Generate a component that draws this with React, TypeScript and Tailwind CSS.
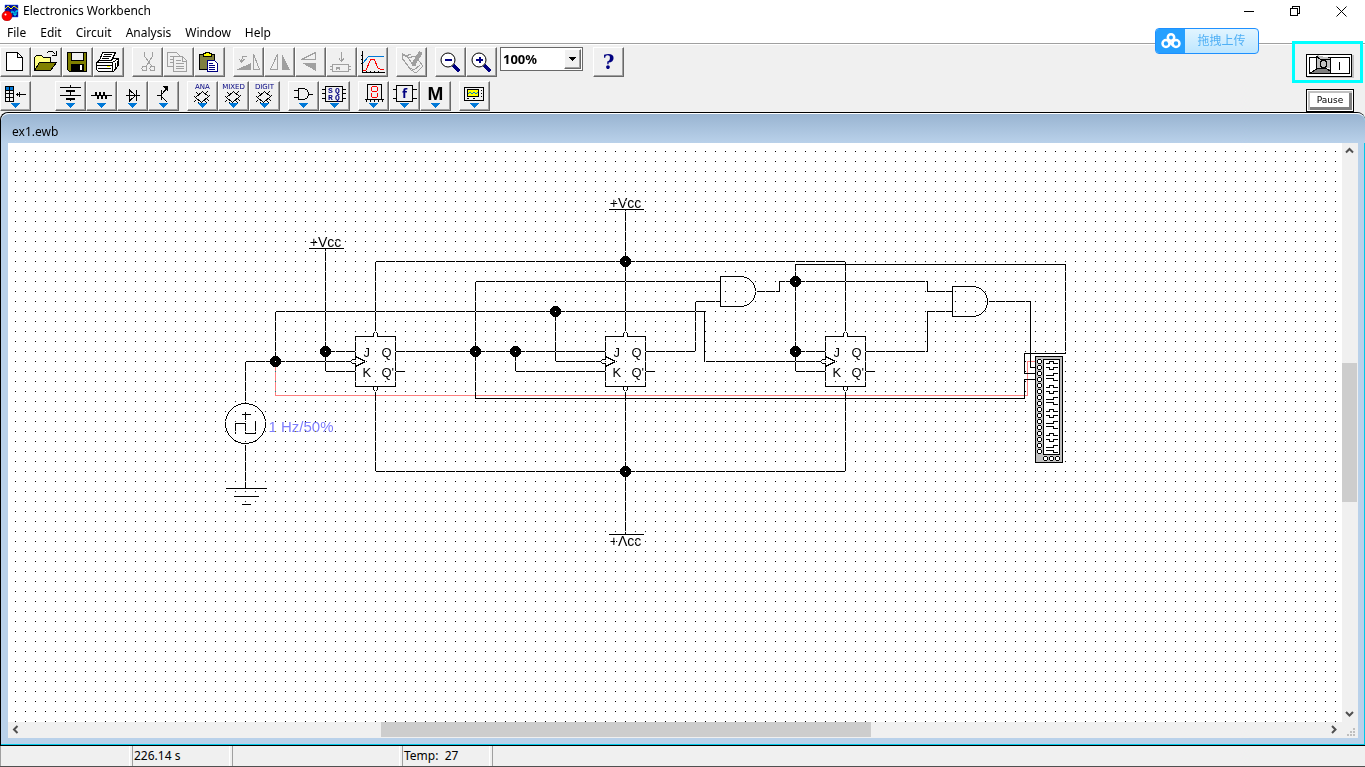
import React from 'react';

const MENUS = ['File', 'Edit', 'Circuit', 'Analysis', 'Window', 'Help'];

interface ToolButtonProps {
  label: string;
  children: React.ReactNode;
}

const ToolButton: React.FC<ToolButtonProps> = ({ label, children }) => (
  <button
    type="button"
    aria-label={label}
    className="h-[30px] w-[31px] shrink-0 border-t border-r border-b border-l border-t-white border-r-[#696969] border-b-[#696969] border-l-white bg-[#f0f0f0] shadow-[inset_-1px_-1px_#a0a0a0]"
  >
    <svg viewBox="1 1 29 28" className="h-full w-full" fill="none" stroke="black" shapeRendering="crispEdges">
      {children}
    </svg>
  </button>
);

// Parts bin button: same as a tool button with the blue drop marker
const BinButton: React.FC<ToolButtonProps> = ({ label, children }) => (
  <ToolButton label={label}>
    {children}
    <path d="M10 22h10l-5 5z" fill="#0078d7" stroke="none" />
  </ToolButton>
);

const Group: React.FC<{ children: React.ReactNode }> = ({ children }) => <div className="flex items-start">{children}</div>;

const Chip: React.FC<{ name: string }> = ({ name }) => (
  <g>
    <path d="M15.5 10.5l6 5-7 6-6-5z" fill="#f0f0f0" />
    <path d="M11 13l-2-2M8 16l-2-1M19 12l2-2M22 15l2-1M9 19l-2 2M12 21l-1 2M20 18l2 2M18 20l2 2" strokeDasharray="1 1" />
    <text x="15.5" y="8" textAnchor="middle" fontSize="7" fill="#000080" stroke="none" fontFamily="'DejaVu Sans', sans-serif">{name}</text>
  </g>
);

const TitleBar: React.FC = () => (
  <header className="flex h-[22px] items-center justify-between bg-white pr-px">
    <div className="flex items-center gap-1">
      <svg width="19" height="19" viewBox="0 0 19 19">
        <path d="M5 3h13v12H5z" fill="#00008b" />
        <path d="M5 3h13v12H5zM8 3v12M12 3v12M15 3v12M5 9h13" fill="none" stroke="#1c60ff" strokeWidth=".5" />
        <path d="M5 7l3-3 3 3 3-3 4 3" fill="none" stroke="#ff0" />
        <path d="M11 14v-4h3v3h2v-4h2" fill="none" stroke="#0ff" />
        <circle cx="7" cy="14" r="5" fill="#f00" stroke="#900" strokeWidth=".6" />
        <circle cx="5.5" cy="12.5" r="1" fill="#fff" />
      </svg>
      <h1 className="text-[12px] leading-5">Electronics Workbench</h1>
    </div>
    <div className="flex">
      <button type="button" aria-label="Minimize" className="flex h-5 w-[46px] items-center justify-center">
        <svg width="11" height="11" stroke="black" fill="none" shapeRendering="crispEdges"><path d="M0 5.5h10" /></svg>
      </button>
      <button type="button" aria-label="Restore" className="flex h-5 w-[46px] items-center justify-center">
        <svg width="11" height="11" stroke="black" fill="none" shapeRendering="crispEdges"><path d="M.5 2.5h7v7h-7zM2.5 2.5v-2h7v7h-2" /></svg>
      </button>
      <button type="button" aria-label="Close" className="flex h-5 w-[46px] items-center justify-center">
        <svg width="11" height="11" stroke="black" fill="none"><path d="M.5.5l10 10M10.5.5l-10 10" /></svg>
      </button>
    </div>
  </header>
);

const MainTools: React.FC = () => (
  <div className="flex items-start gap-2">
    <Group>
      <ToolButton label="New">
        <path d="M6.5 5.5h11l5 5v13h-16z" fill="#fff" />
        <path d="M17.5 5.5v5h5" />
      </ToolButton>
      <ToolButton label="Open">
        <path d="M3.5 22.5v-12l2-2h5l2 2h7v5" fill="#ffff80" />
        <path d="M3.5 23.5l5-8h17l-6 8z" fill="#808000" />
        <path d="M15.5 6.5l2-2h4l3 3M25.5 4v5M21 8.5h5" />
      </ToolButton>
      <ToolButton label="Save">
        <path d="M5.5 5.5h19v19h-17l-2-2z" fill="#808000" />
        <path d="M9.5 5.5h12v8h-12z" fill="#f0f0f0" />
        <path d="M9 17h13v7H9z" fill="#000" stroke="none" />
        <path d="M18 18h2v5h-2z" fill="#fff" stroke="none" />
      </ToolButton>
      <ToolButton label="Print">
        <path d="M3.5 15.5l5-4h17v7l-5 6h-15l-2-2z" fill="#fff" />
        <path d="M9.5 5.5h13l-4 8h-12z" fill="#fff" />
        <path d="M11 7.5h8M10 9.5h8M9 11.5h7M3.5 15.5h16l6-4M19.5 16v8M4 18.5h15M5 21.5h13M22 16v5M24 14v5" />
        <path d="M14 19h3v1h-3z" fill="#ff0" stroke="none" />
      </ToolButton>
    </Group>
    <Group>
      <ToolButton label="Cut">
        <g stroke="#a0a0a0">
          <path d="M12.5 5v4l7 10M20.5 5v4l-6 10" />
          <circle cx="12.5" cy="21.5" r="2.5" />
          <circle cx="20.5" cy="21.5" r="2.5" />
        </g>
      </ToolButton>
      <ToolButton label="Copy">
        <g stroke="#a0a0a0">
          <path d="M4.5 5.5h9l3 3v11h-12zM7 9.5h7M7 12.5h7M7 15.5h7" />
          <path d="M10.5 9.5h9l4 4v11h-13z" fill="#f0f0f0" />
          <path d="M13 13.5h5M13 16.5h8M13 19.5h8M13 21.5h8M19.5 10v4h4" />
        </g>
      </ToolButton>
      <ToolButton label="Paste">
        <path d="M5.5 7.5h15v15h-15z" fill="#808040" />
        <path d="M9.5 9.5v-3h2v-1h4v1h2v3z" fill="#ff0" />
        <path d="M13.5 13.5h7l3 3v8h-10z" fill="#fff" stroke="#000080" />
        <path d="M15 16.5h4M15 18.5h6M15 20.5h6M15 22.5h6" stroke="#000080" />
      </ToolButton>
    </Group>
    <Group>
      <ToolButton label="Rotate">
        <path d="M3 23l15-7v7z" fill="#a0a0a0" stroke="none" />
        <path d="M20.5 22.5V7l6 15.5zM14 9.5H9.5l-1 5M6 12l2.5 3 3-3" stroke="#a0a0a0" />
      </ToolButton>
      <ToolButton label="Flip horizontal">
        <path d="M6.5 22.5h7V7z" stroke="#a0a0a0" />
        <path d="M18 7v16h8z" fill="#a0a0a0" stroke="none" />
      </ToolButton>
      <ToolButton label="Flip vertical">
        <path d="M6.5 12.5h14V5.5z" stroke="#a0a0a0" />
        <path d="M7 16h14v8z" fill="#a0a0a0" stroke="none" />
      </ToolButton>
      <ToolButton label="Create subcircuit">
        <g stroke="#a0a0a0">
          <path d="M6.5 17.5h16v7h-16zM4 19.5h2M4 22.5h2M23 19.5h2M23 22.5h2M15.5 5v9M13 11.5l2.5 3 2.5-3" />
          <path d="M10.5 23v-3h3v3M10 21.5h3" />
        </g>
      </ToolButton>
      <ToolButton label="Display graphs">
        <path d="M5.5 4v21.5h22M9.5 24v2M13.5 24v2M17.5 24v2M21.5 24v2M4 8.5h2M4 12.5h2M4 16.5h2" />
        <path d="M6 16l6-7h15" stroke="#0078d7" />
        <path d="M6 24l3-1 5-11h3l4 9 2 1h4" stroke="#f00" />
      </ToolButton>
    </Group>
    <Group>
      <ToolButton label="Component properties">
        <path d="M6 6v5l9 12 5 3 7-7-8-10-7 2z" stroke="#a0a0a0" />
        <path d="M25 5l-8 13" stroke="#a0a0a0" strokeWidth="4" />
        <path d="M6 9l5-1 6 11 3-1M12 20l6 3 6-5M10 9l5-2" stroke="#a0a0a0" />
      </ToolButton>
    </Group>
    <Group>
      <ToolButton label="Zoom out">
        <circle cx="13" cy="13" r="7" fill="#fff" shapeRendering="auto" />
        <path d="M10 13h7" stroke="#000080" strokeWidth="2" />
        <path d="M18.5 18.5l6 6" stroke="#000080" strokeWidth="3" />
      </ToolButton>
      <ToolButton label="Zoom in">
        <circle cx="13" cy="13" r="7" fill="#fff" shapeRendering="auto" />
        <path d="M10 13h7M13.5 10v6" stroke="#000080" strokeWidth="2" />
        <path d="M18.5 18.5l6 6" stroke="#000080" strokeWidth="3" />
      </ToolButton>
      <div className="relative ml-[3px] h-6 w-[83px]">
        <select
          aria-label="Zoom level"
          defaultValue="100%"
          className="block h-full w-full appearance-none border border-[#696969] bg-white pl-0.5 text-[13px] leading-5 font-bold"
        >
          <option>50%</option>
          <option>80%</option>
          <option>100%</option>
          <option>150%</option>
        </select>
        <span className="pointer-events-none absolute top-0.5 right-0.5 bottom-0.5 flex w-[17px] items-center justify-center border border-t-white border-r-[#696969] border-b-[#696969] border-l-white bg-[#f0f0f0] shadow-[inset_-1px_-1px_#a0a0a0]">
          <svg width="7" height="4" shapeRendering="crispEdges"><path d="M0 0h7L3.5 4z" /></svg>
        </span>
      </div>
    </Group>
    <Group>
      <button
        type="button"
        aria-label="Help"
        className="ml-0.5 h-[30px] w-[31px] border border-t-white border-r-[#696969] border-b-[#696969] border-l-white bg-[#f0f0f0] text-center font-['DejaVu_Serif',serif] text-[20px] leading-7 font-bold text-[#000080] shadow-[inset_-1px_-1px_#a0a0a0]"
      >
        ?
      </button>
    </Group>
  </div>
);

const PartsTools: React.FC = () => (
  <div className="flex items-start gap-2">
    <div className="mr-4 flex">
      <ToolButton label="Favorites">
        <path d="M5 5h9v4H5z" fill="#0078d7" stroke="none" />
        <path d="M5.5 5.5h8v15h-8zM9.5 5v15M5 9.5h8M5 12.5h8M5 16.5h8M16 13.5h10M19.5 11v5M17.5 12v3" />
        <path d="M10 22h10l-5 5z" fill="#0078d7" stroke="none" />
      </ToolButton>
    </div>
    <Group>
      <BinButton label="Sources">
        <path d="M15.5 4v2M5 6.5h21M5 14.5h21M15.5 17v3" />
        <path d="M11 10h9M11 18h9" strokeWidth="2" />
        <path d="M15.5 10v4" />
      </BinButton>
      <BinButton label="Basic">
        <path d="M5 14.5h4l1-3 2 6 2-6 2 6 2-6 2 6 1-3h5" />
      </BinButton>
      <BinButton label="Diodes">
        <path d="M9 14.5h14M12.5 9v11l6-5.5zM19.5 9v11" />
      </BinButton>
      <BinButton label="Transistors">
        <path d="M9 14.5h4M13.500 9v10M14 13l5-6M14 16l5 5" />
        <path d="M15 5h4v4z" fill="#000" />
      </BinButton>
    </Group>
    <Group>
      <BinButton label="Analog ICs">
        <Chip name="ANA" />
      </BinButton>
      <BinButton label="Mixed ICs">
        <Chip name="MIXED" />
      </BinButton>
      <BinButton label="Digital ICs">
        <Chip name="DIGIT" />
      </BinButton>
    </Group>
    <Group>
      <BinButton label="Logic gates">
        <path d="M6 9.5h4M6 16.5h4M20 13.5h5M10.5 7.5h4c8 0 8 11 0 11h-4z" />
      </BinButton>
      <BinButton label="Digital">
        <path d="M6.5 5.5h17v15h-17zM3 8.5h3M3 12.5h3M3 17.5h3M24 8.5h3M24 12.5h3M24 17.5h3" />
        <g fontSize="8" fill="#000080" stroke="none" fontFamily="'Liberation Mono', monospace" fontWeight="bold">
          <text x="9" y="12">S</text>
          <text x="16" y="12">Q</text>
          <text x="9" y="19">R</text>
          <text x="16" y="19">Q</text>
        </g>
      </BinButton>
    </Group>
    <Group>
      <BinButton label="Indicators">
        <path d="M9.5 3.5h14v15h-14zM7 18.5h19M8.5 18v3M12.5 18v3M16.5 18v3M20.5 18v3M24.5 18v3" />
        <path d="M13.5 6v4M19.5 6v4M13.5 12v4M19.5 12v4M14 5.5h5M14 10.5h5M14 16.5h5" stroke="#f00" />
      </BinButton>
      <BinButton label="Controls">
        <path d="M7.5 4.5h16v16h-16zM4 8.5h3M4 17.5h3M24 8.5h4M24 17.5h4" />
        <text x="15.5" y="17" textAnchor="middle" fontSize="13" fontWeight="bold" fill="#000080" stroke="none">f</text>
      </BinButton>
      <BinButton label="Miscellaneous">
        <text x="15.5" y="19" textAnchor="middle" fontSize="19" fontWeight="bold" fill="#000" stroke="none" fontFamily="'Liberation Sans', sans-serif">M</text>
      </BinButton>
    </Group>
    <Group>
      <BinButton label="Instruments">
        <path d="M5.5 6.5h19v13h-19z" fill="#f0f0f0" />
        <path d="M8.5 8.5h11v7h-11z" fill="#ff0" />
        <path d="M9 13l2-2 2 2 2-2 2 2 2-2" stroke="#0078d7" />
        <path d="M22 9.5h1M22 12.5h1M22 15.5h1M8 17.5h2M14 17.5h2" />
      </BinButton>
    </Group>
  </div>
);

const FLIP_FLOPS = [355, 605, 825];
const SUPPLIES = [
  { x: 325, line: 248, text: 246, label: '+Vcc' },
  { x: 625, line: 209, text: 207, label: '+Vcc' },
  { x: 625, line: 534, text: 545, label: '+Λcc' },
];
const NODES = [
  [275, 361], [325, 351], [475, 351], [515, 351], [555, 311],
  [625, 261], [625, 471], [795, 281], [795, 351],
];
const WIRES = [
  'M245 403V361H350',
  'M275 361V311H704V361H820',
  'M555 311V361H600',
  'M325 248V371H355M325 351H355',
  'M375 331V261H845V331',
  'M625 209V331M625 391V534',
  'M395 351H605M395 371H405',
  'M475 351V281H720M475 351V398H1024V379H1036',
  'M515 351V371H605',
  'M645 351H695V301H720M645 371H655',
  'M756 291H779V281H927V291H952',
  'M795 281V264H1065V353H1024V373H1036',
  'M795 281V371H825M795 351H825',
  'M865 351H927V311H952M865 371H875',
  'M988 301H1030V367H1036',
  'M375 391V471H845V391',
  'M245 444V488M225 488H266M233 496H258M241 504H250',
];

const FlipFlop: React.FC<{ x: number }> = ({ x }) => (
  <g transform={`translate(${x} 336)`}>
    <path d="M0 0H40V50H0Z" />
    <path d="M0 20L10 25L0 30" />
    <path d="M18 0V-3L20 -5L22 -3V0M18 50V53L20 55L22 53V50M0 23H-3L-5 25L-3 27H0" fill="#fff" />
    <g stroke="none" fill="#000" fontSize="13">
      <text x="8" y="20">J</text>
      <text x="26" y="20">Q</text>
      <text x="7" y="40">K</text>
      <text x="26" y="40">Q'</text>
    </g>
  </g>
);

const LogicAnalyzer: React.FC = () => (
  <g transform="translate(1035 356)">
    <path d="M0 0H27V106H0Z" fill="#c0c0c0" />
    <path d="M8 3H24V98H8Z" fill="#fff" />
    {Array.from({ length: 16 }, (_, i) => (
      <circle key={i} cx="4" cy={5 + i * 6} r="2" fill="#fff" />
    ))}
    {[10, 16, 22].map((x) => (
      <circle key={x} cx={x} cy="102" r="2" fill="#fff" />
    ))}
    {[0, 24, 48, 72].map((y) => (
      <path key={y} d={`M10 ${y + 7}h4v-2h4v2h4M10 ${y + 11}h4v2h4v-2h4M10 ${y + 19}h8v-2h4M10 ${y + 22}h8v2h4`} />
    ))}
  </g>
);

const Schematic: React.FC = () => (
  <svg className="block h-full w-full bg-white font-['Liberation_Sans',sans-serif]" role="img" aria-label="ex1.ewb schematic">
    <defs>
      <pattern id="grid" x="5" y="1" width="10" height="10" patternUnits="userSpaceOnUse">
        <rect width="1" height="1" fill="#fff" />
      </pattern>
    </defs>
    <rect width="100%" height="100%" fill="#fff" />
    <g transform="translate(-7.5 -142.5)" fill="none" stroke="#000" shapeRendering="crispEdges">
      <path d="M275 361V395H1027V361H1036" stroke="#ff8080" />
      {WIRES.map((d) => (
        <path key={d} d={d} />
      ))}
      {FLIP_FLOPS.map((x) => (
        <FlipFlop key={x} x={x} />
      ))}
      <path d="M720 276H740A15 15 0 0 1 740 306H720Z" />
      <path d="M952 286H972A15 15 0 0 1 972 316H952Z" />
      <circle cx="245" cy="423" r="20" />
      <path d="M241 414H250M245 410V419M235 433V423H245V433H255V421" />
      {SUPPLIES.map((s) => (
        <g key={s.line}>
          <path d={`M${s.x - 17} ${s.line}H${s.x + 18}`} />
          <text x={s.x} y={s.text} textAnchor="middle" fontSize="14" fill="#000" stroke="none">{s.label}</text>
        </g>
      ))}
      <text x="268" y="431" fontSize="15" fill="#8080ff" stroke="none">1 Hz/50%</text>
      {NODES.map(([x, y]) => (
        <circle key={`${x}-${y}`} cx={x} cy={y} r="5" fill="#000" />
      ))}
    </g>
    {/* grid dots invert whatever they land on */}
    <g transform="translate(-8 -143)" className="mix-blend-difference" shapeRendering="crispEdges">
      <rect x="8" y="143" width="100%" height="100%" fill="url(#grid)" />
    </g>
    <g transform="translate(-7.5 -142.5)" fill="none" stroke="#000" shapeRendering="crispEdges">
      <LogicAnalyzer />
    </g>
  </svg>
);

interface ArrowProps {
  label: string;
  d: string;
}

const ScrollArrow: React.FC<ArrowProps> = ({ label, d }) => (
  <button type="button" aria-label={label} className="flex h-4 w-4 shrink-0 items-center justify-center pr-px pb-px">
    <svg width="9" height="9" fill="none" stroke="#505050" strokeWidth="2"><path d={d} /></svg>
  </button>
);

const DocumentWindow: React.FC = () => (
  <main className="flex min-h-0 flex-1 flex-col rounded-t-lg border border-r-0 border-black bg-[#b9d1ea] shadow-[inset_-1px_-1px_#00c8e8]">
    <div className="flex h-[30px] shrink-0 items-end rounded-t-lg border-t border-white bg-gradient-to-b from-[#99b4d1] to-[#b9d1ea] pb-0.5 pl-[11px]">
      <h2 className="text-[12px] leading-[18px]">ex1.ewb</h2>
    </div>
    <div className="mr-[7px] mb-[7px] ml-[7px] flex min-h-0 flex-1 flex-col">
      <div className="flex min-h-0 flex-1">
        <div className="min-w-0 flex-1 overflow-hidden">
          <Schematic />
        </div>
        <div className="flex w-4 flex-col bg-[#f0f0f0]">
          <ScrollArrow label="Scroll up" d="M1 6.5l3.5-3.5 3.5 3.5" />
          <div className="grow-[203] basis-0" />
          <div className="mr-px grow-[138] basis-0 bg-[#cdcdcd]" />
          <div className="grow-[203] basis-0" />
          <ScrollArrow label="Scroll down" d="M1 3l3.5 3.5 3.5-3.5" />
        </div>
      </div>
      <div className="flex h-4 shrink-0 bg-[#f0f0f0]">
        <ScrollArrow label="Scroll left" d="M6.5 1l-3.5 3.5 3.5 3.5" />
        <div className="grow-[356] basis-0" />
        <div className="mb-px grow-[490] basis-0 bg-[#cdcdcd]" />
        <div className="grow-[454] basis-0" />
        <ScrollArrow label="Scroll right" d="M3 1l3.5 3.5-3.5 3.5" />
        <svg width="16" height="16" fill="#bfbfbf" shapeRendering="crispEdges">
          <path d="M11 6h2v2h-2zM8 9h2v2H8zM11 9h2v2h-2zM5 12h2v2H5zM8 12h2v2H8zM11 12h2v2h-2z" />
        </svg>
      </div>
    </div>
  </main>
);

const StatusBar: React.FC = () => (
  <footer className="flex h-[21px] shrink-0 gap-0.5 border-b border-[#505050] bg-[#f0f0f0] text-[12px] leading-5">
    <div className="w-[130px] border-r border-l border-r-white border-l-[#a0a0a0]" />
    <div className="w-[98px] border-r border-l border-r-white border-l-[#a0a0a0] pl-px">226.14 s</div>
    <div className="w-[168px] border-r border-l border-r-white border-l-[#a0a0a0]" />
    <div className="w-[88px] border-r border-l border-r-white border-l-[#a0a0a0] pl-px whitespace-pre">Temp:  27</div>
    <div className="flex-1 border-l border-[#a0a0a0]" />
  </footer>
);

const App: React.FC = () => (
  <div className="relative flex h-screen flex-col overflow-hidden bg-[#f0f0f0] font-['Noto_Sans','Noto_Sans_CJK_SC',sans-serif] text-black">
    <TitleBar />
    <nav className="flex h-[21px] shrink-0 items-center bg-white">
      {MENUS.map((menu) => (
        <button key={menu} type="button" className="px-[7px] text-[12px] leading-5">{menu}</button>
      ))}
    </nav>
    <div className="flex shrink-0 justify-between border-t border-[#a0a0a0] pt-[3px] shadow-[inset_0_1px_white]">
      <div className="flex flex-col gap-1 pb-px">
        <MainTools />
        <PartsTools />
      </div>
      <div className="flex flex-col items-end justify-end pr-[11px]">
        <button
          type="button"
          className="h-[23px] w-12 border border-black bg-white pb-px text-center font-['DejaVu_Sans',sans-serif] text-[9px] leading-4 shadow-[inset_0_0_0_1px_white,inset_3px_3px_#c0c0c0,inset_-4px_-4px_#808080]"
        >
          Pause
        </button>
      </div>
    </div>
    <DocumentWindow />
    <StatusBar />

    <button
      type="button"
      aria-label="Activate simulation"
      className="absolute top-[41px] right-0.5 flex h-[42px] w-[71px] items-center justify-center border-[3px] border-[#00ffff] bg-[#f0f0f0] pt-2 pl-1"
    >
      <svg width="48" height="24" viewBox="0 0 48 24" fill="none" stroke="black" shapeRendering="crispEdges">
        <path d="M1 1h47v23H1z" fill="#c0c0c0" stroke="none" />
        <path d="M.5.5h45v22H.5z" fill="#fff" />
        <path d="M3.5 3.5h40v16h-40z" />
        <path d="M11 1l-1 13h14V4z" fill="#c0c0c0" stroke="none" />
        <path d="M9 15h15v4H5z" fill="#808080" stroke="none" />
        <path d="M10.5 2v13l-6 4M10 2l4 3h10M24.5 3v16M10 15l4-1h6l4 3M33.5 8v8" />
        <ellipse cx="17.5" cy="10" rx="3" ry="4" />
      </svg>
    </button>
    <button
      type="button"
      className="absolute top-7 right-[106px] flex h-[26px] w-[104px] items-stretch overflow-hidden rounded border border-[#1e90ff] bg-gradient-to-b from-[#e2f5ff] to-[#bde6ff] text-[12px] text-[#50b0f5]"
    >
      <span className="flex w-[29px] items-center justify-center bg-[#26a0ff]">
        <svg width="20" height="16" viewBox="0 0 20 16" fill="none" stroke="white" strokeWidth="2.5">
          <circle cx="10" cy="4.5" r="3.2" />
          <circle cx="5" cy="10.5" r="3.5" />
          <circle cx="15" cy="10.5" r="3.5" />
          <path d="M7 8l6 5" />
        </svg>
      </span>
      <span className="flex flex-1 items-center justify-center">拖拽上传</span>
    </button>
  </div>
);

export default App;
